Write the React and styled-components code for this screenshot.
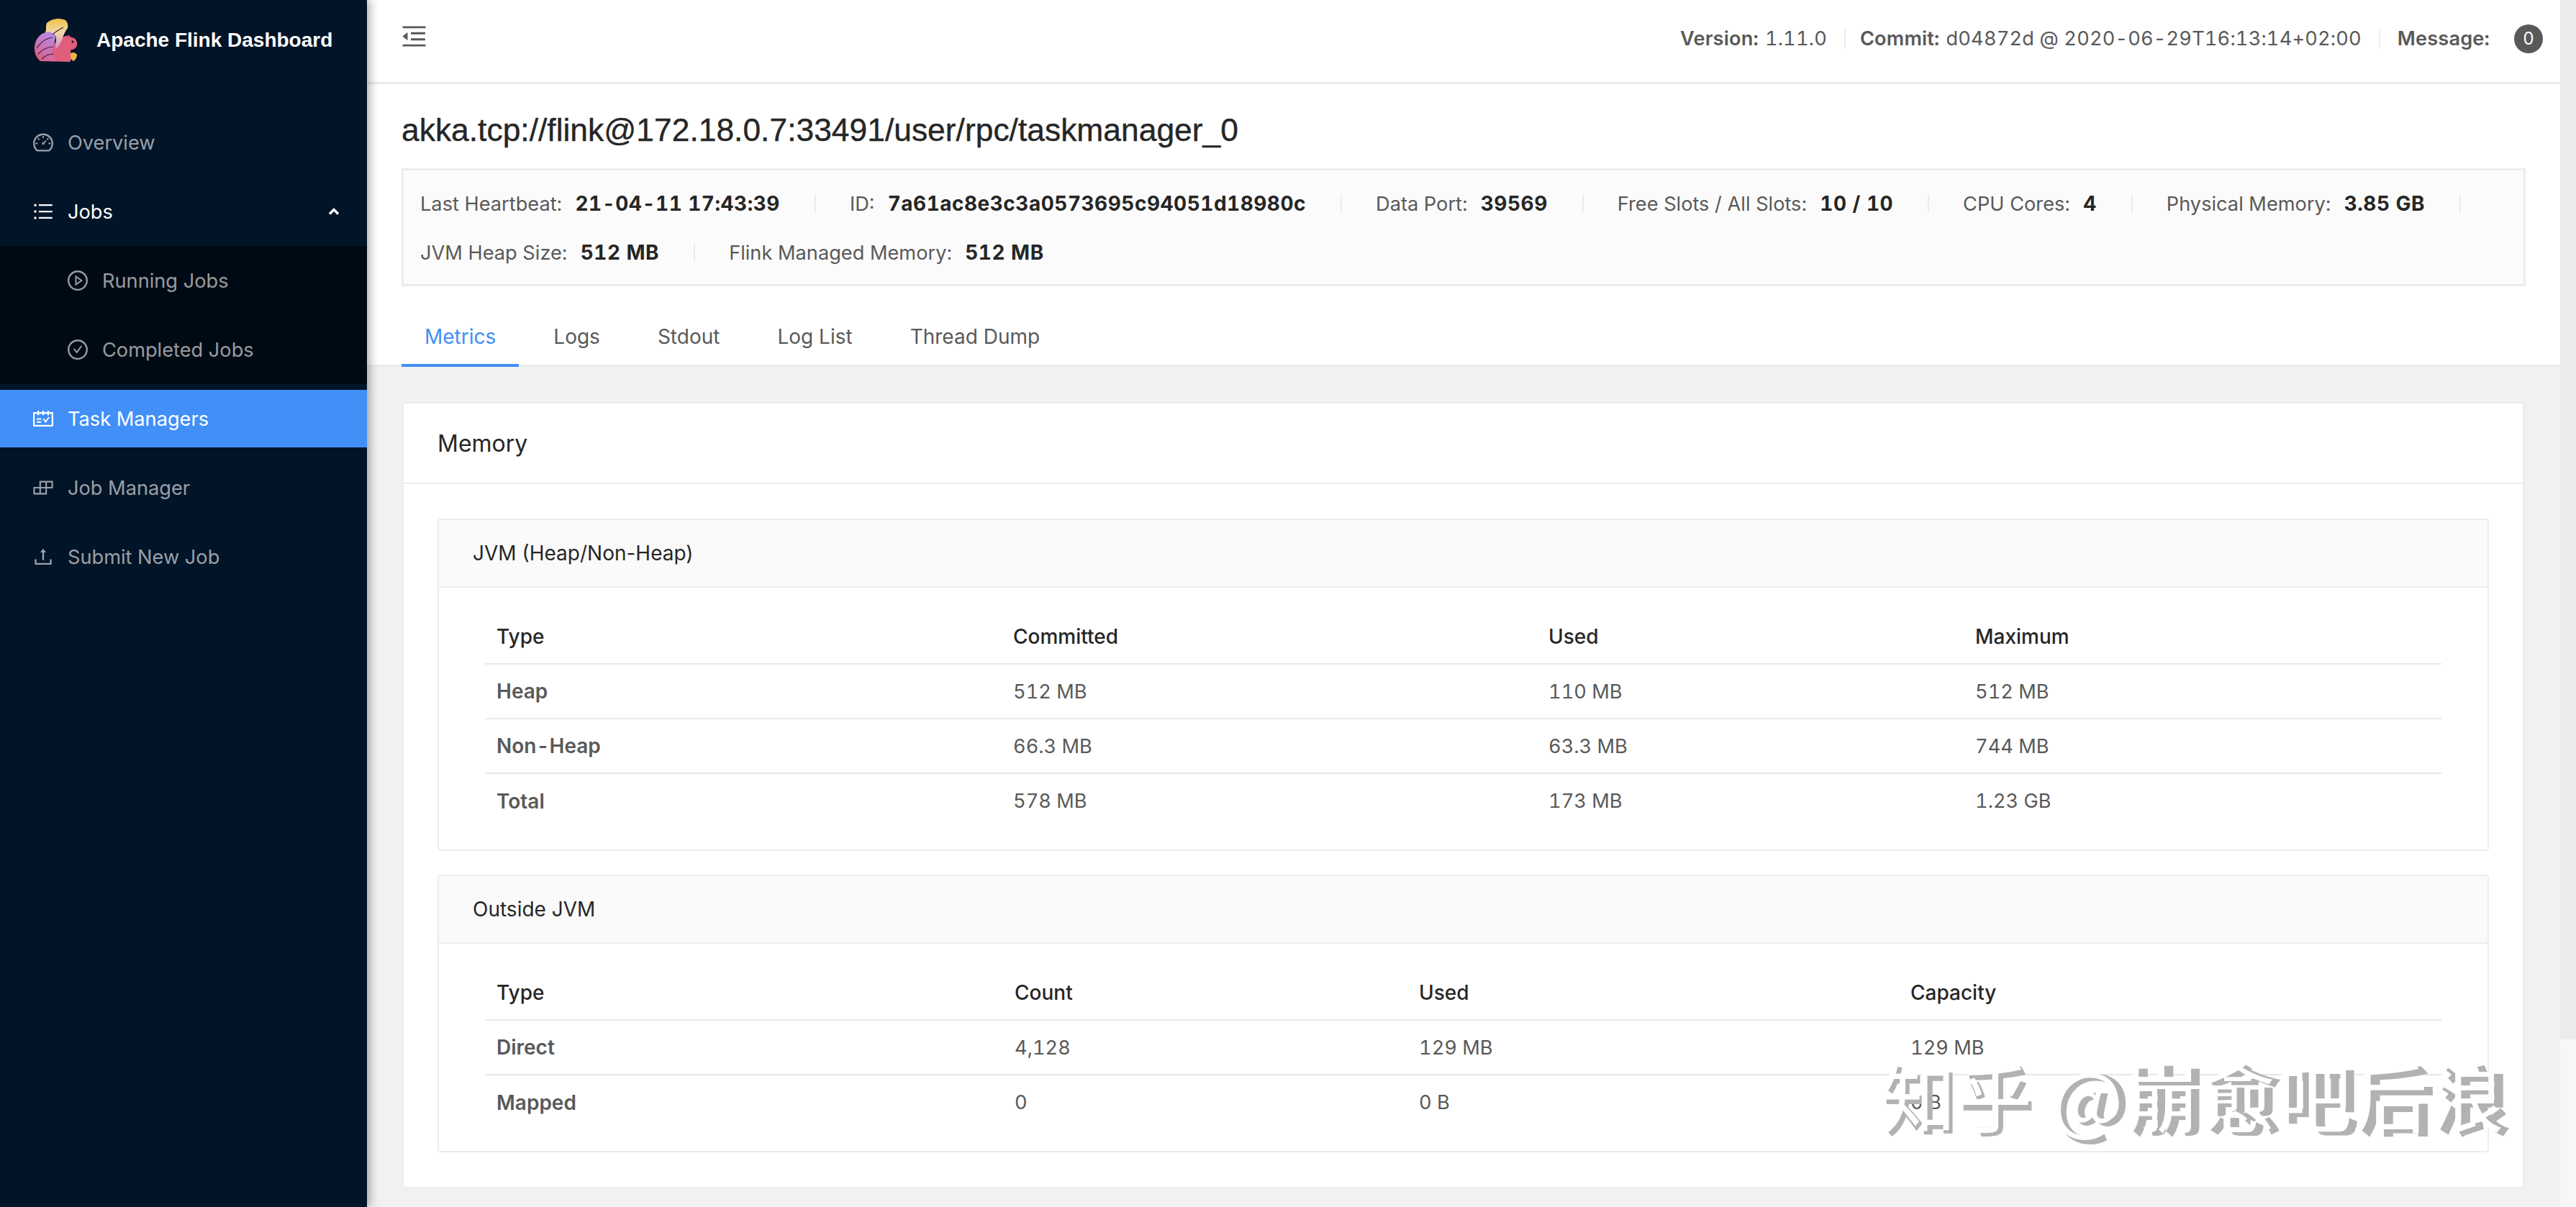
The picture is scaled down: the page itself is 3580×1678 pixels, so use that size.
import React from "react";
import styled, { createGlobalStyle } from "styled-components";
import {
  AiOutlineDashboard,
  AiOutlineUnorderedList,
  AiOutlinePlayCircle,
  AiOutlineCheckCircle,
  AiOutlineSchedule,
  AiOutlineBuild,
  AiOutlineUpload,
  AiOutlineMenuFold,
} from "react-icons/ai";

const GlobalStyle = createGlobalStyle`
  html, body { margin: 0; padding: 0; background: #f1f1f1; }
  body { font-family: Inter, "Noto Sans CJK SC", sans-serif; font-size: 28px; color: #595959; }
  * { box-sizing: border-box; }
`;

const Page = styled.div`
  position: relative;
  display: flex;
  width: 3580px;
  height: 1678px;
  overflow: hidden;
`;

const Sider = styled.aside`
  width: 510px;
  flex: none;
  background: #021428;
  box-shadow: 4px 0 12px rgba(0, 21, 41, 0.35);
  z-index: 2;
`;

const Brand = styled.div`
  display: flex;
  align-items: center;
  gap: 25px;
  height: 158px;
  padding: 0 0 46px 47px;
  font-family: "Liberation Sans", sans-serif;
  font-weight: 700;
  font-size: 28px;
  color: #fff;
`;

const MenuItem = styled.div`
  display: flex;
  align-items: center;
  height: 80px;
  margin-bottom: ${(p) => p.$mb ?? 16}px;
  padding-left: ${(p) => (p.$sub ? 94 : 46)}px;
  gap: 20px;
  color: ${(p) => (p.$active || p.$open ? "#fff" : "rgba(255,255,255,.6)")};
  background: ${(p) => (p.$active ? "#418ff7" : "transparent")};
  font-size: 27.2px;
  svg.menu-icon { width: 32px; height: 32px; margin: 0 -2px; flex: none; }
`;

const Chevron = styled.svg`
  width: 16px;
  height: 12px;
  margin-left: auto;
  margin-right: 38px;
`;

const SubMenu = styled.div`
  background: #000a14;
  padding: 8px 0;
  margin-bottom: 8px;
`;

const Main = styled.main`
  flex: 1;
  min-width: 0;
  display: flex;
  flex-direction: column;
`;

const TopBar = styled.header`
  display: flex;
  align-items: flex-start;
  justify-content: space-between;
  height: 117px;
  padding: 34px 24px 0 45px;
  background: #fff;
  border-bottom: 3px solid #ececec;
  svg { width: 41px; height: 41px; color: #595959; margin-top: -4px; }
`;

const Status = styled.div`
  display: flex;
  align-items: center;
  height: 40px;
  font-size: 27.2px;
  font-variant-numeric: tabular-nums;
  letter-spacing: 0.15px;
`;

const StatusItem = styled.div`
  display: flex;
  align-items: center;
  gap: 9px;
  padding: 0 ${(p) => p.$pr ?? 24}px 0 ${(p) => p.$pl ?? 20}px;
  border-right: ${(p) => (p.$last ? "none" : "2px solid #ececec")};
  line-height: 28px;
  b { font-weight: 600; }
`;

const Badge = styled.span`
  display: inline-flex;
  align-items: center;
  justify-content: center;
  width: 40px;
  height: 40px;
  margin-left: 25px;
  border-radius: 50%;
  background: #595959;
  color: #fff;
  font-size: 24px;
`;

const Head = styled.section`
  padding: 46px 48px 0;
  background: #fff;
  height: 393px;
`;

const Title = styled.h1`
  margin: 0 0 35px;
  height: 36px;
  line-height: 36px;
  font-family: "Liberation Sans", sans-serif;
  font-size: 44.4px;
  font-weight: 400;
  color: #262626;
  -webkit-text-stroke: 0.4px #262626;
`;

const InfoBox = styled.div`
  display: flex;
  flex-wrap: wrap;
  align-content: flex-start;
  height: 164px;
  padding: 12px 0 0 23px;
  background: #fbfbfb;
  border: 3px solid #ececec;
  font-size: 27.2px;
`;

const InfoItem = styled.div`
  display: flex;
  align-items: center;
  gap: 18px;
  height: 68px;
  b {
    font-size: 28px;
    font-weight: 700;
    font-variant-numeric: tabular-nums;
    letter-spacing: 0.5px;
    color: #262626;
  }
  &::after {
    content: "";
    width: 2px;
    height: 26px;
    margin: 0 47px 0 30px;
    background: ${(p) => (p.$plain ? "transparent" : "#ececec")};
  }
`;

const Tabs = styled.nav`
  display: flex;
  align-items: flex-end;
  gap: 16px;
  height: 112px;
  margin: 0 -48px;
  padding: 0 48px;
  border-bottom: 3px solid #ececec;
`;

const Tab = styled.div`
  display: flex;
  align-items: center;
  height: 80px;
  margin-bottom: -3px;
  padding: 0 32px;
  color: ${(p) => (p.$active ? "#418ff7" : "#595959")};
  border-bottom: 4px solid ${(p) => (p.$active ? "#418ff7" : "transparent")};
`;

const Body = styled.div`
  flex: 1;
  padding: 49px 50px 0 49px;
  min-height: 0;
`;

const Card = styled.div`
  height: 1093px;
  background: #fff;
  border: 2px solid #ececec;
  border-radius: 4px;
`;

const CardHead = styled.div`
  display: flex;
  align-items: center;
  height: 112px;
  padding-left: 47px;
  border-bottom: 2px solid #ececec;
  font-size: 32px;
  color: #262626;
`;

const CardBody = styled.div`
  padding: 48px 47px 0;
`;

const Inner = styled.div`
  margin-bottom: 33px;
  border: 2px solid #ececec;
  border-radius: 4px;
`;

const InnerHead = styled.div`
  display: flex;
  align-items: center;
  height: 94px;
  padding-left: 47px;
  background: #fafafa;
  border-bottom: 2px solid #ececec;
  color: #262626;
`;

const InnerBody = styled.div`
  padding: 30px 64px;
`;

const Table = styled.table`
  width: 100%;
  table-layout: fixed;
  border-collapse: collapse;
`;

const Col = styled.col`
  width: ${(p) => p.$w}px;
`;

const Th = styled.th`
  height: 76px;
  padding: 0 16px;
  text-align: left;
  font-weight: 500;
  color: #262626;
  border-bottom: 2px solid #e8e8e8;
`;

const Td = styled.td`
  height: 76px;
  padding: 0 16px;
  font-size: ${(p) => (p.$bold ? 28 : 27.2)}px;
  font-weight: ${(p) => (p.$bold ? 600 : 400)};
  font-variant-numeric: tabular-nums;
  tr:not(:last-child) > & { border-bottom: 2px solid #e8e8e8; }
`;

const Watermark = styled.div`
  position: absolute;
  left: 2618px;
  top: 1470px;
  font-family: "Noto Sans CJK SC", sans-serif;
  font-size: 104px;
  font-weight: 700;
  line-height: 112px;
  letter-spacing: 2px;
  white-space: nowrap;
  color: #b2b2b2;
  z-index: 3;
  &::after {
    content: attr(data-text);
    position: absolute;
    left: -4px;
    top: -4px;
    font-weight: 400;
    color: #fff;
  }
`;

const ScrollTrack = styled.div`
  flex: none;
  width: 22px;
  background: #f7f7f7;
  &::before {
    content: "";
    display: block;
    height: 1445px;
    background: #ececec;
  }
`;

const Logo = () => (
  <svg width="62" height="62" viewBox="0 0 62 62" style={{ flex: "none" }}>
    <defs>
      <linearGradient id="crest" x1="0" y1="0" x2="0" y2="1">
        <stop offset="0" stopColor="#f2c24a" />
        <stop offset="0.45" stopColor="#f2d7a8" />
        <stop offset="1" stopColor="#c98ad8" />
      </linearGradient>
      <linearGradient id="tail" x1="0.6" y1="0" x2="0.2" y2="1">
        <stop offset="0" stopColor="#b88ae6" />
        <stop offset="1" stopColor="#dc5f86" />
      </linearGradient>
    </defs>
    <path d="M9 60C2 54-1 44 2 35c8 5 14 9 20 11 4-8 10-16 20-20 4-2 8-2 10 1 6 0 9 6 8 11-1 4-5 6-8 6-2 4 0 8 1 12l-3 5z" fill="#df5e7b" />
    <path d="M2 35c2-8 8-13 14-15 4-4 10 0 14 4 0 6-2 14-4 20-2 6 0 10 4 16H12C6 54 1 44 2 35z" fill="url(#tail)" />
    <path d="M16 20c2-5 0-9 2-13 6-6 18-8 26-4 3 3 4 7 3 11-3 4-5 8-7 14-2 6-6 12-10 16 0-8 2-14 0-20-4-4-10-6-14-4z" fill="url(#crest)" />
    <path d="M4 42c6-9 13-14 22-15M6 50c7-7 13-10 21-10M11 57c5-5 9-7 16-7M26 23c4-4 8-6 15-10" stroke="#33203f" strokeWidth="1.2" fill="none" />
    <circle cx="54" cy="33" r="1.5" fill="#111" />
    <path d="M46 27l2-4 3 4z" fill="#b94a63" />
    <path d="M51 49c3-2 7-1 9 2 0 4-2 7-5 9-3-2-5-6-4-11z" fill="#f0b341" />
  </svg>
);

const jvmRows = [
  ["Heap", "512 MB", "110 MB", "512 MB"],
  ["Non-Heap", "66.3 MB", "63.3 MB", "744 MB"],
  ["Total", "578 MB", "173 MB", "1.23 GB"],
];

const outsideRows = [
  ["Direct", "4,128", "129 MB", "129 MB"],
  ["Mapped", "0", "0 B", "0 B"],
];

const info = [
  ["Last Heartbeat:", "21-04-11 17:43:39"],
  ["ID:", "7a61ac8e3c3a0573695c94051d18980c"],
  ["Data Port:", "39569"],
  ["Free Slots / All Slots:", "10 / 10"],
  ["CPU Cores:", "4"],
  ["Physical Memory:", "3.85 GB"],
  ["JVM Heap Size:", "512 MB"],
  ["Flink Managed Memory:", "512 MB", true],
];

const DataTable = ({ widths, head, rows }) => (
  <Table>
    <colgroup>
      {widths.map((w) => (
        <Col key={w} $w={w} />
      ))}
    </colgroup>
    <thead>
      <tr>
        {head.map((h) => (
          <Th key={h}>{h}</Th>
        ))}
      </tr>
    </thead>
    <tbody>
      {rows.map((r) => (
        <tr key={r[0]}>
          {r.map((c, i) => (
            <Td key={i} $bold={i === 0}>
              {c}
            </Td>
          ))}
        </tr>
      ))}
    </tbody>
  </Table>
);

const watermark = "知乎 @崩愈吧后浪";

export default function App() {
  return (
    <Page>
      <GlobalStyle />
      <Sider>
        <Brand>
          <Logo />
          Apache Flink Dashboard
        </Brand>
        <MenuItem>
          <AiOutlineDashboard className="menu-icon" />
          Overview
        </MenuItem>
        <MenuItem $open $mb={8}>
          <AiOutlineUnorderedList className="menu-icon" />
          Jobs
          <Chevron viewBox="0 0 16 12">
            <path d="M2 9.5 8 3.5l6 6" fill="none" stroke="#fff" strokeWidth="3.4" />
          </Chevron>
        </MenuItem>
        <SubMenu>
          <MenuItem $sub>
            <AiOutlinePlayCircle className="menu-icon" />
            Running Jobs
          </MenuItem>
          <MenuItem $sub $mb={0}>
            <AiOutlineCheckCircle className="menu-icon" />
            Completed Jobs
          </MenuItem>
        </SubMenu>
        <MenuItem $active>
          <AiOutlineSchedule className="menu-icon" />
          Task Managers
        </MenuItem>
        <MenuItem>
          <AiOutlineBuild className="menu-icon" />
          Job Manager
        </MenuItem>
        <MenuItem>
          <AiOutlineUpload className="menu-icon" />
          Submit New Job
        </MenuItem>
      </Sider>
      <Main>
        <TopBar>
          <AiOutlineMenuFold />
          <Status>
            <StatusItem>
              <b>Version:</b> 1.11.0
            </StatusItem>
            <StatusItem>
              <b>Commit:</b> d04872d @ 2020-06-29T16:13:14+02:00
            </StatusItem>
            <StatusItem $last $pr={0} $pl={24}>
              <b>Message:</b>
              <Badge>0</Badge>
            </StatusItem>
          </Status>
        </TopBar>
        <Head>
          <Title>akka.tcp://flink@172.18.0.7:33491/user/rpc/taskmanager_0</Title>
          <InfoBox>
            {info.map(([k, v, plain]) => (
              <InfoItem key={k} $plain={plain}>
                <span>{k}</span>
                <b>{v}</b>
              </InfoItem>
            ))}
          </InfoBox>
          <Tabs>
            <Tab $active>Metrics</Tab>
            <Tab>Logs</Tab>
            <Tab>Stdout</Tab>
            <Tab>Log List</Tab>
            <Tab>Thread Dump</Tab>
          </Tabs>
        </Head>
        <Body>
          <Card>
            <CardHead>Memory</CardHead>
            <CardBody>
              <Inner>
                <InnerHead>JVM (Heap/Non-Heap)</InnerHead>
                <InnerBody>
                  <DataTable
                    widths={[718, 744, 593, 664]}
                    head={["Type", "Committed", "Used", "Maximum"]}
                    rows={jvmRows}
                  />
                </InnerBody>
              </Inner>
              <Inner>
                <InnerHead>Outside JVM</InnerHead>
                <InnerBody>
                  <DataTable
                    widths={[720, 562, 683, 754]}
                    head={["Type", "Count", "Used", "Capacity"]}
                    rows={outsideRows}
                  />
                </InnerBody>
              </Inner>
            </CardBody>
          </Card>
        </Body>
      </Main>
      <ScrollTrack />
      <Watermark data-text={watermark}>{watermark}</Watermark>
    </Page>
  );
}
